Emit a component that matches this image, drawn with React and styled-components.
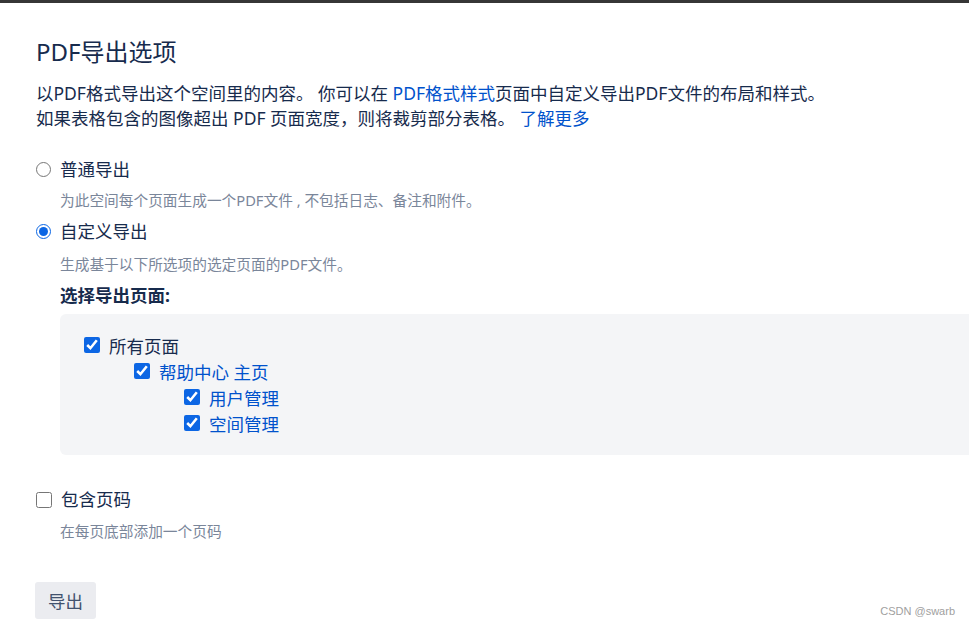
import React, { useState } from "react";
import styled, { createGlobalStyle } from "styled-components";

const tree = [
  { id: "all", label: "所有页面", level: 0, link: false },
  { id: "home", label: "帮助中心 主页", level: 1, link: true },
  { id: "users", label: "用户管理", level: 2, link: true },
  { id: "spaces", label: "空间管理", level: 2, link: true },
];

export default function App() {
  const [mode, setMode] = useState("custom");
  const [checked, setChecked] = useState({ all: true, home: true, users: true, spaces: true });
  const [pageNumbers, setPageNumbers] = useState(false);

  function toggle(id) {
    setChecked((prev) => ({ ...prev, [id]: !prev[id] }));
  }

  return (
    <>
      <GlobalStyle />
      <TopBar />
      <Page>
        <Title>PDF导出选项</Title>
        <Intro>
          以PDF格式导出这个空间里的内容。 你可以在 <Link href="#">PDF格式样式</Link>页面中自定义导出PDF文件的布局和样式。
          <br />
          如果表格包含的图像超出 PDF 页面宽度，则将裁剪部分表格。 <Link href="#">了解更多</Link>
        </Intro>

        <OptionRow $top={26}>
          <Radio
            type="radio"
            name="mode"
            checked={mode === "normal"}
            onChange={() => setMode("normal")}
          />
          普通导出
        </OptionRow>
        <Hint $top={6}>为此空间每个页面生成一个PDF文件 , 不包括日志、备注和附件。</Hint>

        <OptionRow $top={6}>
          <Radio
            type="radio"
            name="mode"
            checked={mode === "custom"}
            onChange={() => setMode("custom")}
          />
          自定义导出
        </OptionRow>
        <Hint $top={8}>生成基于以下所选项的选定页面的PDF文件。</Hint>

        <SectionLabel>选择导出页面:</SectionLabel>
        <TreePanel>
          {tree.map((node) => (
            <TreeRow key={node.id} $level={node.level} $link={node.link}>
              <Check type="checkbox" checked={checked[node.id]} onChange={() => toggle(node.id)} />
              {node.label}
            </TreeRow>
          ))}
        </TreePanel>

        <OptionRow $top={32}>
          <Check
            type="checkbox"
            checked={pageNumbers}
            onChange={() => setPageNumbers(!pageNumbers)}
          />
          包含页码
        </OptionRow>
        <Hint $top={7}>在每页底部添加一个页码</Hint>

        <ExportButton type="button">导出</ExportButton>
      </Page>
      <Watermark>CSDN @swarb</Watermark>
    </>
  );
}

const GlobalStyle = createGlobalStyle`
  html, body {
    margin: 0;
    background: #ffffff;
    overflow: hidden;
  }
  body {
    font-family: "Noto Sans", "Noto Sans CJK SC", sans-serif;
    color: #172b4d;
  }
`;

const TopBar = styled.div`
  height: 3px;
  background: #363636;
`;

const Page = styled.main`
  display: flex;
  flex-direction: column;
  align-items: flex-start;
  padding: 34px 0 0 36px;
`;

const Title = styled.h1`
  margin: 0;
  font-size: 24px;
  line-height: 30px;
  font-weight: 400;
  color: #172b4d;
`;

const Intro = styled.p`
  margin: 14px 0 0;
  font-size: 17.5px;
  line-height: 25px;
  color: #172b4d;
`;

const Link = styled.a`
  color: #0052cc;
  text-decoration: none;
`;

const OptionRow = styled.label`
  display: flex;
  align-items: center;
  gap: 9px;
  margin-top: ${(p) => p.$top}px;
  font-size: 17.5px;
  line-height: 25px;
  color: #172b4d;
  cursor: pointer;
`;

const Radio = styled.input`
  width: 15px;
  height: 15px;
  margin: 0;
  accent-color: #0c66e4;
`;

const Check = styled.input`
  width: 16px;
  height: 16px;
  margin: 0;
  accent-color: #0c66e4;
`;

const Hint = styled.p`
  margin: ${(p) => p.$top}px 0 0 24px;
  font-size: 14.7px;
  line-height: 25px;
  color: #7a869a;
`;

const SectionLabel = styled.h3`
  margin: 6px 0 0 24px;
  font-size: 17.5px;
  line-height: 25px;
  font-weight: 700;
  color: #172b4d;
`;

const TreePanel = styled.div`
  align-self: stretch;
  margin: 6px 0 0 24px;
  padding: 18px 0 19px;
  background: #f4f5f7;
  border-radius: 6px 0 0 6px;
`;

const TreeRow = styled.label`
  display: flex;
  align-items: center;
  gap: 9px;
  height: 26px;
  padding-left: ${(p) => 24 + p.$level * 50}px;
  font-size: 17.5px;
  color: ${(p) => (p.$link ? "#0052cc" : "#172b4d")};
  cursor: pointer;
`;

const ExportButton = styled.button`
  margin: 38px 0 0 -1px;
  height: 37px;
  padding: 0 13px;
  border: none;
  border-radius: 3px;
  background: #ebecf0;
  color: #42526e;
  font-family: inherit;
  font-size: 17.5px;
  cursor: pointer;
`;

const Watermark = styled.div`
  position: absolute;
  right: 14px;
  top: 605px;
  font-family: "Liberation Sans", Arial, sans-serif;
  font-size: 11px;
  color: #a0a0a0;
`;
